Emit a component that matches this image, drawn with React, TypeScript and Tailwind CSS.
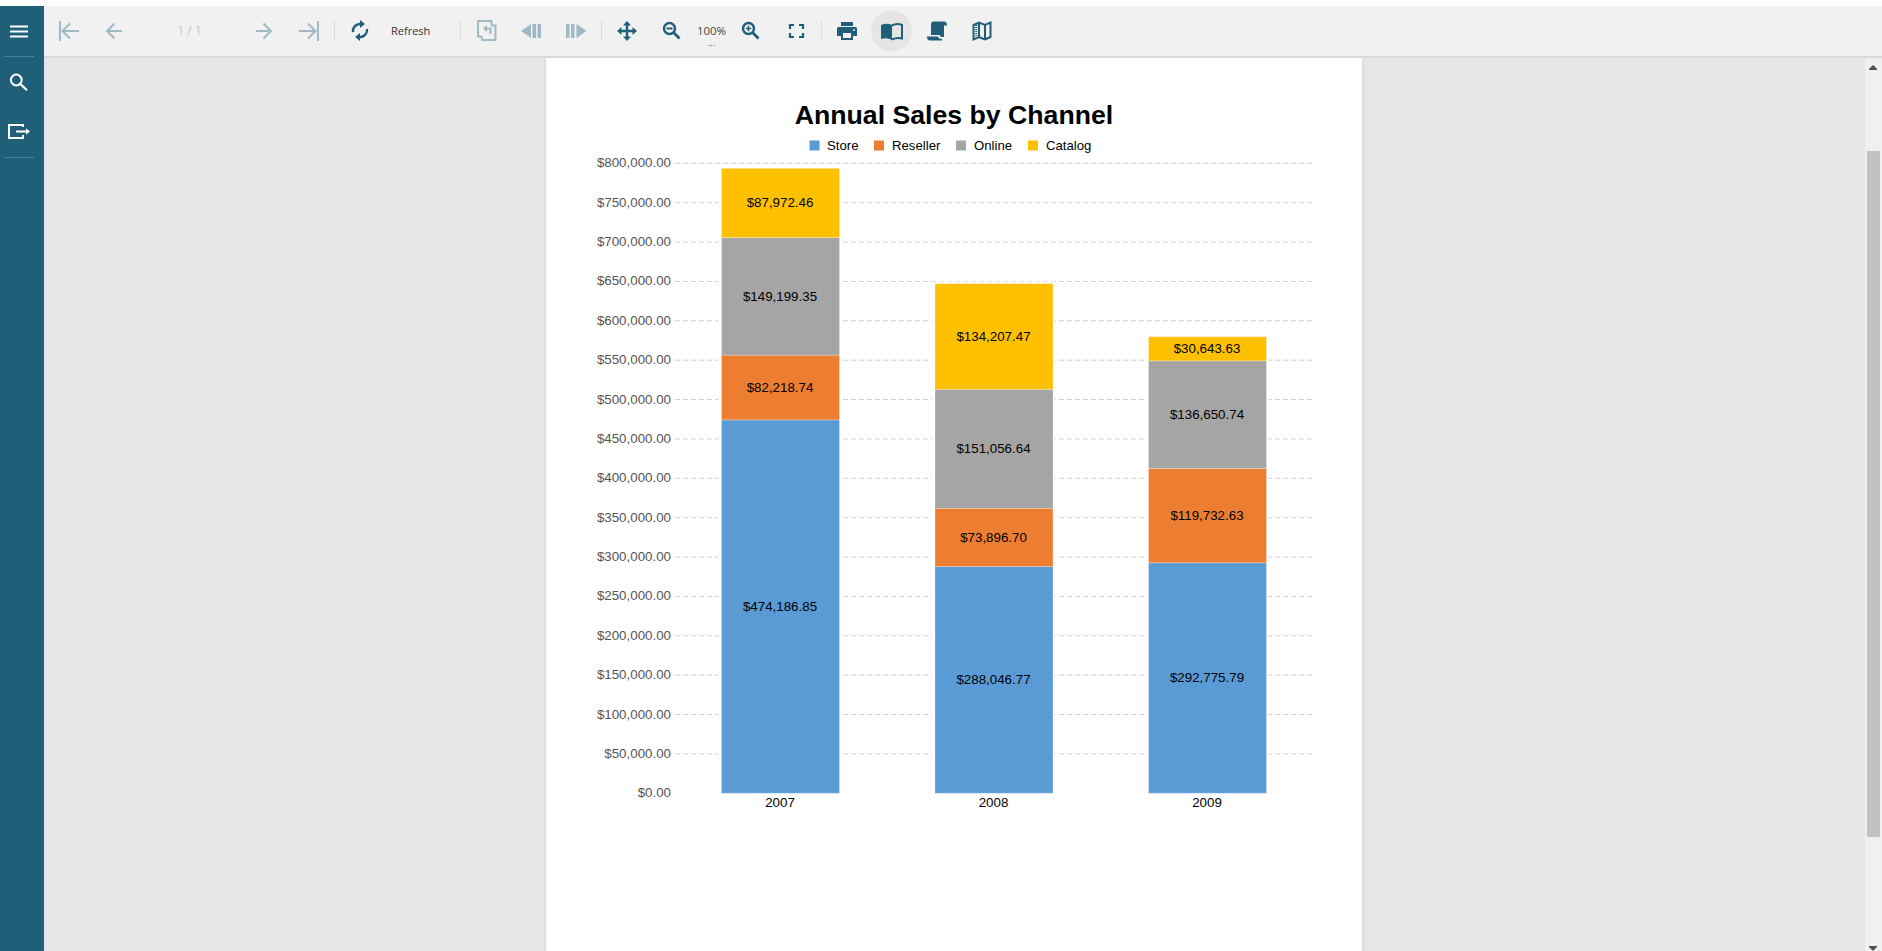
import type { ReactNode } from "react";

// Report viewer toolbar + stacked bar chart page.

const BRAND = "#1f5f78";
const MUTED = "#9fb9c5";

const SERIES = [
  { name: "Store", color: "#5b9bd5", legendX: 809.5, textX: 827 },
  { name: "Reseller", color: "#ed7d31", legendX: 874, textX: 892 },
  { name: "Online", color: "#a5a5a5", legendX: 956, textX: 974 },
  { name: "Catalog", color: "#ffc000", legendX: 1028, textX: 1046 },
];

const YEARS = [
  { year: "2007", x: 721.5, values: [474186.85, 82218.74, 149199.35, 87972.46] },
  { year: "2008", x: 935, values: [288046.77, 73896.7, 151056.64, 134207.47] },
  { year: "2009", x: 1148.5, values: [292775.79, 119732.63, 136650.74, 30643.63] },
];

const BASE_Y = 793.3;
const PX_PER_DOLLAR = 39.375 / 50000;
const BAR_W = 118;

const money = (n: number) =>
  "$" + n.toLocaleString("en-US", { minimumFractionDigits: 2, maximumFractionDigits: 2 });

function Tool({ children, muted }: { children: ReactNode; muted?: boolean }) {
  return (
    <div className="w-[45px] h-full flex items-center justify-center shrink-0">
      <svg width="25" height="24" viewBox="0 0 25 24" fill="none" stroke={muted ? MUTED : BRAND} strokeWidth="2">
        {children}
      </svg>
    </div>
  );
}

function Sep({ className = "" }: { className?: string }) {
  return (
    <div className={`w-[5px] h-full flex items-center justify-center shrink-0 ${className}`}>
      <div className="w-px h-[20px] bg-[#dcdcdc]" />
    </div>
  );
}

function Toolbar() {
  return (
    <div className="h-[52px] shrink-0 bg-[#f1f1f1] border-b-2 border-[#d9d9d9] flex pl-[3px] font-['Open_Sans',sans-serif]">
      <Tool muted>
        <path d="M3 2V22M6 12H22M13 4.5L5.5 12L13 19.5" />
      </Tool>
      <Tool muted>
        <path d="M5 12H20M12.5 4.5L5 12L12.5 19.5" />
      </Tool>
      <div className="w-[105px] h-full flex items-center justify-center text-[12px] text-[#b8cad2] shrink-0">1 / 1</div>
      <Tool muted>
        <path d="M4 12H19M11.5 4.5L19 12L11.5 19.5" />
      </Tool>
      <Tool muted>
        <path d="M21 2V22M2 12H18M11 4.5L18.5 12L11 19.5" />
      </Tool>
      <Sep />
      <Tool>
        <path d="M6 13A7 7 0 0 1 13 5M20 10A7 7 0 0 1 13 18" strokeWidth="2.4" />
        <path d="M13 1L18 5L13 9ZM13 22L8 18L13 14Z" fill={BRAND} stroke="none" />
      </Tool>
      <div className="w-[76px] h-full flex items-center pl-[9px] text-[11px] text-[#333333] shrink-0">Refresh</div>
      <Sep className="mr-px" />
      <Tool muted>
        <path d="M8 17.5H4V2H17.5V6M8 17.5V21H21.5V6.5H17" strokeLinejoin="round" />
        <path d="M11 9.5H16.5V15" />
        <path d="M13 6L9 9.5L13 13Z" fill={MUTED} stroke="none" />
      </Tool>
      <Tool muted>
        <path d="M2 12L12 5V19ZM13.5 5H17V19H13.5ZM18.5 5H22V19H18.5Z" fill={MUTED} stroke="none" />
      </Tool>
      <Tool muted>
        <path d="M2 5H5.5V19H2ZM7 5H10.5V19H7ZM12.5 5L22.5 12L12.5 19Z" fill={MUTED} stroke="none" />
      </Tool>
      <Sep />
      <Tool>
        <path d="M5 12H21M13 4V20" strokeWidth="2.4" />
        <path
          d="M13 2L17 6.5H9ZM13 22L9 17.5H17ZM3 12L7.5 8V16ZM23 12L18.5 16V8Z"
          fill={BRAND}
          stroke="none"
        />
      </Tool>
      <Tool>
        <circle cx="10.5" cy="9.5" r="5.5" strokeWidth="2.4" />
        <path d="M14.8 13.8L20.5 19.5" strokeWidth="2.8" />
        <path d="M7.5 9.5H13.5" />
      </Tool>
      <div className="w-[35px] h-full flex flex-col items-center pt-[17px] shrink-0">
        <div className="text-[11.5px] leading-[16px] text-[#444444]">100%</div>
        <div className="text-[9px] leading-[6px] mt-[1px] text-[#555555]">...</div>
      </div>
      <Tool>
        <circle cx="9.5" cy="9.5" r="5.5" strokeWidth="2.4" />
        <path d="M13.8 13.8L19.5 19.5" strokeWidth="2.8" />
        <path d="M6.8 9.5H12.2M9.5 6.8V12.2" strokeWidth="1.6" />
      </Tool>
      <Tool>
        <path d="M6 10V6H10M15 6H19V10M19 14V18H15M10 18H6V14" strokeWidth="2.2" />
      </Tool>
      <Sep />
      <Tool>
        <g fill={BRAND} stroke="none">
          <rect x="7" y="3" width="12" height="4" />
          <path d="M4.5 8H21.5A1.5 1.5 0 0 1 23 9.5V17H19V21H7V17H3V9.5A1.5 1.5 0 0 1 4.5 8Z" />
        </g>
        <rect x="9" y="14" width="8" height="5" fill="#f1f1f1" stroke="none" />
        <circle cx="20" cy="11" r="1" fill="#f1f1f1" stroke="none" />
      </Tool>
      <div className="w-[45px] h-full flex items-center justify-center shrink-0">
        <div className="w-[41px] h-[40px] rounded-full bg-[#e5e5e5] flex items-center justify-center">
          <svg width="25" height="24" viewBox="0 0 25 24" fill="none" stroke={BRAND} strokeWidth="2">
            <path d="M2 6Q8 3.5 13 6V21Q8 18 2 20Z" fill={BRAND} stroke="none" />
            <path d="M13 6.5Q18 4 23 6V19.5Q18 18 13 20.5" />
          </svg>
        </div>
      </div>
      <Tool>
        <g fill={BRAND} stroke="none">
          <path d="M9 2.5H20Q23 2.5 23 6.5H20V18H18Q16 18 15.5 16H7V5Q7 2.5 9 2.5Z" />
          <path d="M3 17.5H14Q14.5 20 18 20V21.5H6Q3 21.5 3 17.5Z" />
        </g>
      </Tool>
      <Tool>
        <path d="M4.5 6L10 3.5L16 6L21.5 3.5V18L16 20.5L10 18L4.5 20.5Z" />
        <path d="M10 3.5V18M16 6V20.5" />
        <path d="M7.2 6V18" strokeDasharray="1 1" strokeWidth="2" />
      </Tool>
    </div>
  );
}

function Sidebar() {
  return (
    <aside className="w-[44px] shrink-0 bg-[#1f5f78] flex flex-col">
      <div className="h-[50px] flex items-center justify-center">
        <svg width="44" height="50" viewBox="0 0 44 50" fill="#ffffff">
          <rect x="10" y="19.5" width="18" height="2" />
          <rect x="10" y="24.5" width="18" height="2" />
          <rect x="10" y="29.5" width="18" height="2" />
        </svg>
      </div>
      <div className="h-px mx-[4px] w-[30px] bg-white/20" />
      <div className="h-[50px]">
        <svg width="44" height="50" viewBox="0 0 44 50" fill="none" stroke="#ffffff" strokeWidth="2">
          <circle cx="16.3" cy="23" r="5.4" />
          <path d="M20.3 27L27 33.3" strokeWidth="2.2" />
        </svg>
      </div>
      <div className="h-[50px]">
        <svg width="44" height="50" viewBox="0 0 44 50" fill="none" stroke="#ffffff" strokeWidth="2">
          <path d="M23 20V18H9V31H23V28" />
          <path d="M16 24.5H27" />
          <path d="M26 21.3L30 24.5L26 27.7Z" fill="#ffffff" stroke="none" />
        </svg>
      </div>
      <div className="h-px mx-[4px] w-[30px] bg-white/20" />
    </aside>
  );
}

function Chart() {
  const ticks = Array.from({ length: 17 }, (_, i) => i * 50000);
  const mono = "'Liberation Sans', Arial, sans-serif";

  return (
    <svg width="816" height="893" viewBox="546 58 816 893" fontFamily={mono} className="block">
      <text x="954" y="124" textAnchor="middle" fontSize="26.67" fontWeight="700" fill="#000000">
        Annual Sales by Channel
      </text>

      {SERIES.map((s) => (
        <g key={s.name}>
          <rect x={s.legendX} y="140.5" width="10" height="10" fill={s.color} />
          <text x={s.textX} y="150" fontSize="13.2" fill="#000000">
            {s.name}
          </text>
        </g>
      ))}

      {ticks.map((t) => {
        const y = BASE_Y - t * PX_PER_DOLLAR;
        return (
          <g key={t}>
            <text x="671" y={y + 4} textAnchor="end" fontSize="13.33" fill="#555555">
              {money(t)}
            </text>
            {t > 0 && <line x1="675" x2="1315" y1={y} y2={y} stroke="#cfcfcf" strokeDasharray="5 3" />}
          </g>
        );
      })}

      {YEARS.map((col) => {
        const total = col.values.reduce((a, b) => a + b, 0);
        let running = 0;
        return (
          <g key={col.year}>
            <rect
              x={col.x - 3}
              y={BASE_Y - total * PX_PER_DOLLAR - 2}
              width={BAR_W + 5}
              height={total * PX_PER_DOLLAR + 2}
              fill="#ffffff"
            />
            {col.values.map((v, i) => {
              const h = v * PX_PER_DOLLAR;
              const y = BASE_Y - (running + v) * PX_PER_DOLLAR;
              running += v;
              return (
                <g key={i}>
                  <rect
                    x={col.x}
                    y={y}
                    width={BAR_W}
                    height={h}
                    fill={SERIES[i].color}
                    stroke="#ffffff"
                    strokeOpacity="0.25"
                  />
                  <text x={col.x + BAR_W / 2 - 0.5} y={y + h / 2 + 4.3} textAnchor="middle" fontSize="13.33" fill="#000000">
                    {money(v)}
                  </text>
                </g>
              );
            })}
            <text x={col.x + BAR_W / 2 - 0.5} y="807" textAnchor="middle" fontSize="13.33" fill="#000000">
              {col.year}
            </text>
          </g>
        );
      })}
    </svg>
  );
}

function Scrollbar() {
  return (
    <div className="w-[17px] shrink-0 bg-[#f0f0f0] flex flex-col items-center overflow-hidden">
      <svg width="9" height="5" viewBox="0 0 9 5" fill="#505050" className="mt-[7px] shrink-0">
        <path d="M4.5 0L8 4V5H0V4L3 1Z" />
      </svg>
      <div className="w-[13px] h-[686px] mt-[81px] bg-[#c1c1c1] shrink-0" />
      <svg width="9" height="5" viewBox="0 0 9 5" fill="#505050" className="mt-[109px] shrink-0">
        <path d="M0 0H8V1L4 5L0 1Z" />
      </svg>
    </div>
  );
}

export default function App() {
  return (
    <div className="h-[951px] w-full overflow-hidden bg-white pt-[6px] flex">
      <Sidebar />
      <div className="flex-1 min-w-0 flex flex-col">
        <Toolbar />
        <div className="flex-1 min-h-0 flex">
          <div className="flex-1 min-w-0 bg-[#e6e6e6] overflow-hidden">
            <div className="w-[816px] h-full ml-[502px] bg-white shadow-[0_0_4px_rgba(0,0,0,0.1)]">
              <Chart />
            </div>
          </div>
          <Scrollbar />
        </div>
      </div>
    </div>
  );
}
